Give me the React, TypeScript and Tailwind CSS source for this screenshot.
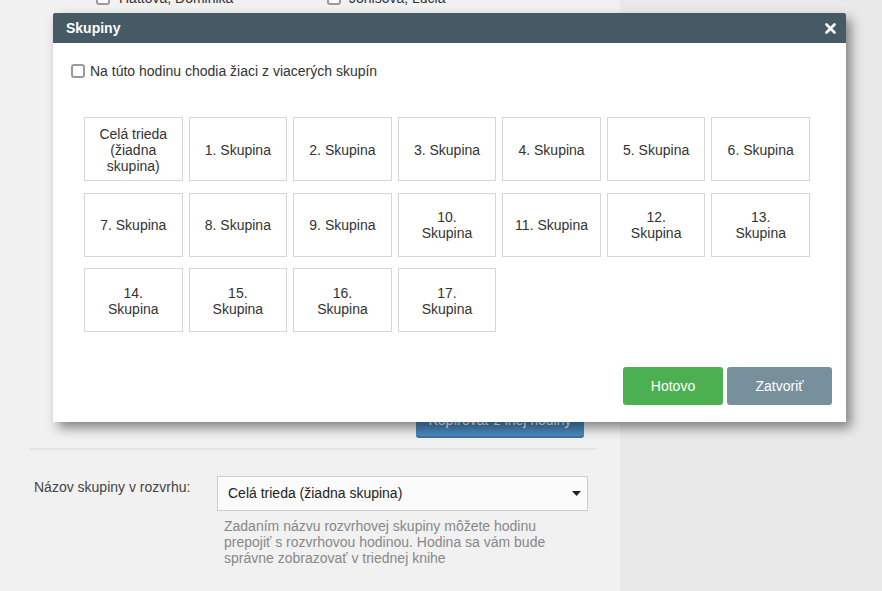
const groups = [
  "Celá trieda (žiadna skupina)",
  ...Array.from({ length: 17 }, (_, i) =>
    i === 10 ? "11.\u00a0Skupina" : `${i + 1}. Skupina`
  ),
];

const Checkbox = () => (
  <span className="inline-block w-[14px] h-[14px] shrink-0 rounded-[3px] border-2 border-[#9a9a9a] bg-white"></span>
);

const GroupsModal = () => {
  return (
    <div className="absolute left-[53px] top-[13px] w-[793px] bg-white rounded-t-[2px] shadow-[5px_6px_12px_rgba(0,0,0,0.45)]">
      <div className="h-[30px] bg-[#455a64] px-[13px] flex items-center justify-between rounded-t-[2px]">
        <p className="text-white font-bold text-[14px]">Skupiny</p>
        <svg width="11" height="11" viewBox="0 0 11 11" className="mr-[-3px]">
          <path
            d="M1.5 1.5 L9.5 9.5 M9.5 1.5 L1.5 9.5"
            stroke="white"
            strokeWidth="2.6"
            strokeLinecap="round"
          />
        </svg>
      </div>

      <div className="px-[18px] pt-[21px]">
        <label className="flex items-center gap-[5px] text-[14px] leading-[14px] text-[#333]">
          <Checkbox />
          <span>Na túto hodinu chodia žiaci z viacerých skupín</span>
        </label>

        <div className="ml-[13px] mt-[39px] w-[726px] grid grid-cols-7 gap-x-[6px] gap-y-[11.5px]">
          {groups.map((g) => (
            <div
              key={g}
              className="h-[64px] pt-[1px] border border-[#d6d6d6] bg-white flex items-center justify-center text-center px-[12px] text-[14px] leading-[16px] text-[#333]"
            >
              {g}
            </div>
          ))}
        </div>
      </div>

      <div className="flex justify-end gap-[4px] pr-[14px] pb-[17px] mt-[35px]">
        <button className="w-[100px] h-[38px] rounded-[3px] bg-[#4caf50] text-white text-[14px]">
          Hotovo
        </button>
        <button className="w-[105px] h-[38px] rounded-[3px] bg-[#78909c] text-white text-[14px]">
          Zatvoriť
        </button>
      </div>
    </div>
  );
};

export default function App() {
  return (
    <div
      className="relative w-[882px] h-[591px] overflow-hidden flex"
      style={{ fontFamily: '"Liberation Sans", Arial, sans-serif' }}
    >
      <div className="w-[620px] bg-[#f1f1f1] flex flex-col">
        <div className="h-[404px] overflow-hidden">
          <div className="flex mt-[-9px] text-[14px] leading-[14px] text-[#333]">
            <label className="ml-[96px] w-[231px] flex items-center gap-[9px]">
              <Checkbox />
              <span>Hattová, Dominika</span>
            </label>
            <label className="flex items-center gap-[8px]">
              <Checkbox />
              <span>Jonisová, Lucia</span>
            </label>
          </div>
          <p className="ml-[115px] mt-[5px] text-[12px] leading-[16px] text-[#999]">
            Lorem ipsum žiaci ktorí sú v skupine sú označení a ostatní žiaci nie sú vôbec
          </p>
        </div>

        <div className="pl-[416px]">
          <button className="w-[168px] h-[34px] rounded-[3px] bg-[#4a88bc] border-b-2 border-[#3d73a0] text-white text-[14px]">
            Kopírovať z inej hodiny
          </button>
        </div>

        <div className="ml-[30px] w-[567px] mt-[10px] h-[2px] bg-[#e4e4e4]"></div>

        <div className="flex mt-[26px]">
          <p className="ml-[34px] w-[183px] pt-[1px] text-[14px] leading-[20px] text-[#444]">
            Názov skupiny v rozvrhu:
          </p>
          <div className="w-[371px]">
            <div className="h-[35px] border border-[#cccccc] bg-[#fbfbfb] flex items-center justify-between pl-[10px] pr-[6px] text-[14px] text-[#222]">
              <span>Celá trieda (žiadna skupina)</span>
              <svg width="9" height="5" viewBox="0 0 9 5">
                <path d="M0 0 H9 L4.5 5 Z" fill="#222" />
              </svg>
            </div>
            <p className="mt-[7px] pl-[7px] pr-[24px] text-[14px] leading-[16px] text-[#888]">
              Zadaním názvu rozvrhovej skupiny môžete hodinu prepojiť s rozvrhovou
              hodinou. Hodina sa vám bude správne zobrazovať v triednej knihe
            </p>
          </div>
        </div>
      </div>
      <div className="flex-1 bg-[#e9e9e9]"></div>

      <GroupsModal />
    </div>
  );
}
